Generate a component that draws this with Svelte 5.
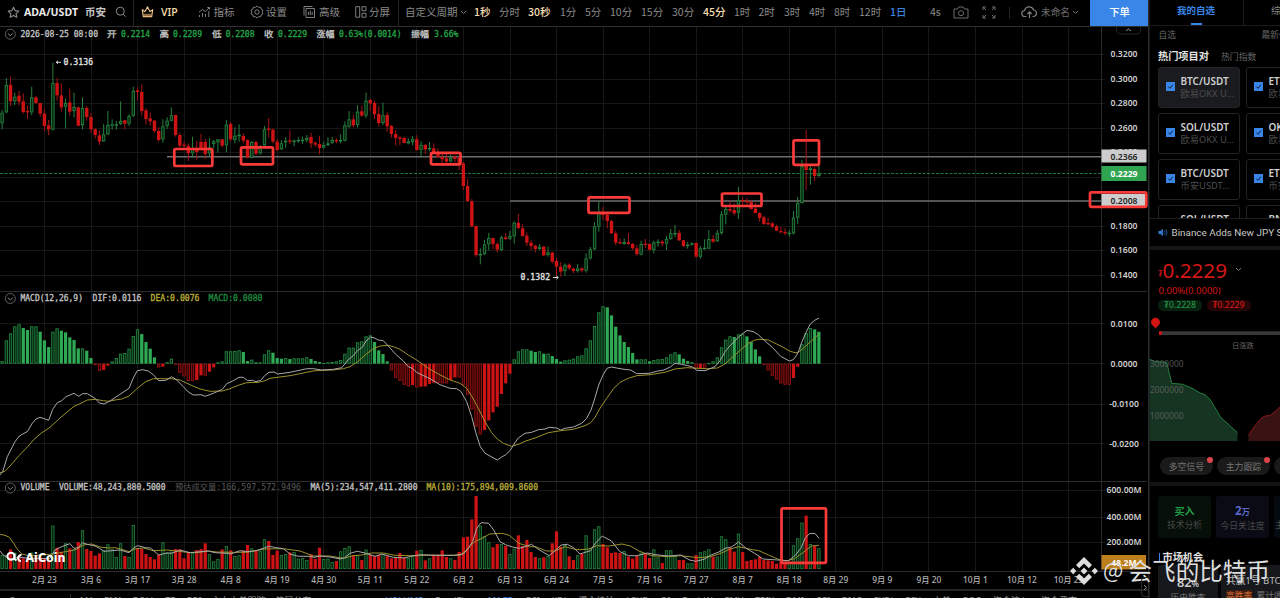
<script>
  const STEP = 4.232;
  const cx = (i) => 2.1 + STEP * i;

  // high, body top, body bottom, low in thirds of a pixel; direction u = up, d = down
  const parse = (s, off) =>
    s.trim().split(/\s+/).map((t) => {
      const up = t[0] === 'u';
      const v = t.slice(1).split(',').map((n) => off + Number(n) / 3);
      return { up, hi: v[0], top: v[1], bot: v[2], lo: v[3] };
    });

  const candles = [
    ...parse(`u150,158,190,208 u54,75,157,160 d50,75,124,138 u98,110,124,135 d93,107,125,137 d100,124,156,161 d136,153,157,177 u80,112,157,165 d108,112,129,132 d129,129,161,170
    d146,161,198,213 d180,196,208,226 u8,69,209,211 d54,69,106,122 d70,106,142,155 u115,129,140,206 d86,127,155,167 u98,141,153,172 d140,142,197,199 u112,144,195,208
    d138,144,171,182 d159,171,208,218 d205,208,225,235 d211,226,245,255 u192,223,244,246 u153,195,223,225 u178,193,197,209 u183,193,196,209 u124,183,192,195 d180,181,191,208
    u163,168,191,198 u80,93,167,171 d82,91,96,122 d73,96,153,166 d144,151,177,194 d157,175,184,197 d179,182,213,218 d202,213,240,246 u178,199,238,248 u172,182,198,207
    u142,166,182,184 d165,165,225,230 d218,225,257,262 d244,254,258,268 d250,258,280,303 u230,264,280,293 d243,264,276,299 d222,246,268,272 d236,246,282,297 u235,262,280,290
    u240,244,252,265 u237,238,247,278 d237,238,257,262 u180,194,256,276 d186,192,238,245 u202,227,240,250 u193,224,229,246 d220,228,242,250 d238,240,293,295 u243,246,293,295
    d243,246,281,285 u255,265,280,284 u198,208,256,262 d174,206,209,233 d205,209,245,250 d238,245,270,274 u240,250,268,270 u231,242,247,264 d212,241,245,252 u238,242,246,258
    u232,240,243,248 u230,239,242,252`, 60),
    ...parse(`u165,174,181,187 d158,171,190,205 d185,188,194,200 d167,192,204,223 u185,195,203,206 u172,190,195,198 u171,180,188,192 d175,180,182,190
    u163,180,183,190 u124,136,182,184 u93,118,140,143 d105,118,136,143 u75,95,135,143 d77,94,107,110 u38,62,107,114 d57,60,70,93 d62,69,103,117 d78,102,129,140
    u68,106,129,135 d97,105,139,155 d135,138,162,173 d150,162,174,197 d168,173,177,196 d170,174,189,190 u175,184,190,193 u168,178,186,196 d166,178,210,212 u184,195,209,233
    d192,195,208,222 u186,204,208,214 d190,205,217,219 d205,222,231,234 d222,230,238,259 d221,235,245,248 u223,234,244,248 d226,230,237,248 d228,234,250,270 d246,250,318,330
    d297,318,363,366 d357,364,439,441 d438,438,525,531 u505,522,526,553 u480,493,522,525 u459,474,493,511 d473,474,492,507 d486,492,509,518 u468,472,510,513 d459,472,477,481
    u453,468,476,480 u424,428,469,491 d402,428,444,448 d433,445,468,470 d457,467,488,498 d480,488,498,511 d494,497,507,517 u492,500,507,510 d498,500,526,528 u500,517,525,530
    d515,518,545,550 d534,543,560,590 d546,560,575,590 u550,555,573,588 d550,554,565,570 d563,566,573,580 u552,565,573,578 d562,565,571,577 u520,535,572,578 u501,508,535,539
    u426,439,508,511 u363,400,440,455`, 80),
    ...parse(`d290,310,315,330 d309,314,333,355 d330,333,370,372 d362,370,398,405 d385,396,400,403 u385,396,402,404 d369,397,402,405 d398,402,415,420
    d405,415,432,438 u392,402,434,436 d387,401,404,414 d400,402,419,422 u392,397,420,430 u388,395,398,410 d390,395,400,408 u378,387,401,420 u357,370,387,389 u345,369,371,382
    d360,369,391,393 d390,391,408,411 u396,404,408,416 u397,400,404,407 d397,399,440,443 u408,415,440,446 u388,413,416,419 u360,387,416,417 d375,387,395,399 u360,369,394,396
    u303,313,369,374 u290,297,314,343 d275,297,302,308 d280,300,310,316 u231,270,308,327 d261,270,273,288 d264,272,277,285 d270,276,297,299 d279,296,309,310 d306,309,324,335
    d318,322,342,345 d323,339,341,345 d336,340,350,355 d344,349,362,364 d350,363,367,370 d355,366,370,376 u360,368,371,380 u303,323,370,374 u261,279,323,342 u150,168,279,281
    d60,165,180,240 u168,175,180,224 d172,177,198,213 u168,192,198,200`, 110)
  ];

  const macd = `213 151 130 109 103 114 120 109 109 125 151 171 125 115 122 127 142 150 175 175 182 204 225 242 240 227 214 204 191 189 176 138 118 132 156 176 202 232 230 217
  206 224 248 259 273 273 270 256 257 245 232 217 214 184 184 183 181 186 213 209 217 217 193 181 188 204 206 204 207 205 205 205 202 207 213 216 219 217 216 214
  210 191 173 173 157 154 139 136 156 181 192 214 241 263 272 284 289 285 292 290 289 282 278 279 280 280 270 262 262 285 314 358 410 433 420 391 367 350 312 280
  251 208 184 178 178 182 186 184 191 191 198 207 215 211 209 206 199 196 175 151 108 67 49 52 76 110 136 156 171 189 208 208 208 214 210 208 207 202 193 187
  193 206 213 217 237 234 236 219 214 202 172 149 139 141 133 131 139 156 178 199 224 241 257 268 280 284 284 264 230 163 129 114 118 125`
    .trim().split(/\s+/).map((n) => (221 - Number(n)) / 3);

  const hist = macd.map((h, i) => {
    const p = i ? macd[i - 1] : 0;
    return { h, hollow: h > 0 ? h >= p : h <= p };
  });

  const volume = `225 225 208 218 228 235 235 218 225 230 235 240 137 203 215 190 205 207 186 151 207 213 227 220 210 193 208 231 190 228 231 135 205 207 222 231 238 223 187 218
  215 207 208 235 217 218 210 207 190 223 244 237 208 198 211 228 226 212 195 205 213 212 178 183 225 212 225 222 217 216 236 234 240 223 237 203 237 236 246 243
  214 204 199 225 225 240 209 225 229 225 222 228 235 234 219 233 234 225 212 210 241 235 224 224 211 231 235 240 216 172 170 118 48 137 168 187 202 192 192 198
  222 206 166 198 180 216 231 235 232 228 190 154 200 195 229 240 226 222 166 205 148 139 192 202 219 217 219 213 230 236 228 218 220 234 208 232 249 211 211 228
  240 240 250 250 225 217 214 208 230 230 169 178 203 215 161 216 243 240 238 230 240 241 243 251 245 250 246 196 175 128 107 192 198 205`
    .trim().split(/\s+/).map((n) => (267 - Number(n)) / 3);

  const seg = (s, ox, sx, oy) =>
    s.trim().split(/\s+/).map((p) => {
      const [x, y] = p.split(',').map(Number);
      return `${(ox + x / sx).toFixed(1)},${(oy + y / 3).toFixed(1)}`;
    }).join(' ');

  const dif = seg(`0,555 8,545 22,500 45,455 58,438 83,424 95,402 108,387 120,382 133,386 146,391 158,358 172,338 185,332 198,320 222,310 236,319 248,311 262,311 285,325 298,339 312,342 330,333 360,313 387,295 400,264 412,242 428,239 445,243 460,254 476,272 498,271 515,260 530,270 550,290 565,306 580,315 603,314 616,319 640,310 667,298 680,281 700,272 717,262 730,262 743,272 758,271 768,275 782,271 795,256 807,247 822,246 833,252 870,247 920,236 940,236 965,240 1000,238 1025,233 1047,207 1060,197 1072,182 1087,172 1098,153 1112,141 1123,144 1135,150 1150,152 1165,168 1187,193 1210,213 1225,230 1237,235 1250,247`, 0, 3, 290)
    + ' ' + seg(`0,252 30,266 60,284 90,295 110,296 122,304 140,335 155,380 168,430 181,470 195,490 219,503 232,510 244,502 257,494 270,482 285,458 295,444 315,430 335,427 355,419 375,417 388,412 410,414 422,420 435,415 460,411 485,400 500,385 513,360 523,330 536,285 549,255 561,235 574,231 590,234 612,238 632,240 650,251 688,250 710,244 732,240 752,230 765,220 785,223 803,227 818,231 830,241 855,242 885,230 900,212 915,185 930,167 943,155 955,142 968,131 981,121 1000,125 1015,134 1035,153 1057,172 1082,199 1108,213 1120,209 1130,195 1138,178 1146,155 1158,127 1171,102 1184,91 1197,84`, 420, 3, 290);
  const dea = seg(`0,548 15,544 30,528 58,496 83,470 100,450 123,430 150,412 180,384 205,363 222,349 240,341 262,330 285,328 310,332 325,334 345,330 365,327 387,318 412,295 437,275 460,266 515,266 540,270 570,284 600,297 630,304 667,303 690,296 717,285 740,278 775,277 795,272 810,265 870,257 920,247 945,242 1000,240 1030,236 1050,230 1072,216 1098,193 1120,176 1140,168 1165,166 1180,170 1200,178 1225,195 1250,210`, 0, 3, 290)
    + ' ' + seg(`0,217 25,235 55,252 90,270 120,280 140,295 155,318 175,355 195,395 215,428 232,447 250,460 275,469 300,461 315,454 345,444 385,428 422,422 460,418 495,407 512,398 525,382 540,355 560,325 580,297 600,277 625,265 650,257 690,254 735,247 765,237 800,233 860,236 892,234 915,222 940,199 965,177 985,160 1005,150 1020,148 1045,150 1070,162 1095,175 1108,183 1125,188 1133,188 1150,175 1175,152 1197,132`, 420, 3, 290);
  const ma5 = seg(`0,213 10,225 30,238 60,232 100,236 150,235 165,210 185,200 198,195 210,191 222,205 235,203 247,188 262,193 285,198 298,205 312,214 360,210 387,218 400,205 412,197 437,203 452,204 476,225 500,219 515,220 540,210 570,218 600,215 625,213 645,218 680,220 692,222 720,212 743,215 768,212 793,204 806,199 830,203 850,206 870,222 895,229 925,229 945,232 958,228 990,231 1020,237 1034,233 1050,220 1072,214 1095,219 1110,224 1125,229 1145,222 1180,232 1212,234 1237,228 1256,225`, 0, 3, 480)
    + ' ' + seg(`0,224 40,226 80,226 103,222 115,205 125,185 135,145 145,128 163,130 175,150 190,185 205,195 220,201 235,205 250,200 265,193 280,207 295,218 307,227 320,213 335,195 350,193 365,203 380,222 395,216 405,212 415,192 433,168 455,183 475,215 495,227 515,227 540,219 560,224 590,228 620,225 640,240 655,244 675,238 690,226 710,216 725,205 740,201 757,186 775,205 795,220 815,237 850,240 875,242 890,228 905,205 915,175 925,161 938,160 948,175`, 420, 2.376, 480);
  const ma10 = seg(`0,163 15,166 28,172 40,188 50,205 65,222 90,228 120,225 150,223 180,218 220,211 235,205 250,195 275,192 300,201 325,204 345,203 365,208 387,215 405,207 430,204 460,212 500,210 530,213 560,217 590,218 625,213 650,216 700,217 740,217 793,207 850,206 900,213 940,228 990,228 1030,235 1060,227 1085,225 1115,219 1150,219 1185,226 1230,227 1256,227`, 0, 3, 480)
    + ' ' + seg(`0,226 95,226 110,210 130,185 150,173 165,162 195,160 212,166 235,190 260,200 275,200 300,213 320,213 345,200 365,207 380,209 400,207 420,197 450,198 480,192 500,198 520,213 550,227 590,230 620,227 660,233 690,230 715,220 735,208 757,200 790,209 805,212 830,226 850,237 870,243 890,236 915,213 930,198 948,196`, 420, 2.376, 480);

  const depthBid = '1149.5,359.3 1155,361.5 1166.7,362.3 1171.7,383.3 1182.7,384.3 1193,388.8 1200,393 1205,394.7 1210,399.3 1220.7,417.3 1237.5,432.7';
  const depthAsk = '1248.5,435.5 1254,427 1261,418.5 1265,416 1270,415.5 1274,412.5 1281,406';

  const dates = ['2月 23', '3月 6', '3月 17', '3月 28', '4月 8', '4月 19', '4月 30', '5月 11', '5月 22', '6月 2', '6月 13', '6月 24', '7月 5', '7月 16', '7月 27', '8月 7', '8月 18', '8月 29', '9月 9', '9月 20', '10月 1', '10月 12', '10月 23'];
  const vlines = dates.map((_, i) => Math.round(44 + 46.55 * i) + 0.5);
  const levels = [
    [54, '0.3200'], [79, '0.3000'], [103, '0.2800'], [128, '0.2600'], [152, '0.2400'], [177, ''], [201, ''], [226, '0.1800'], [250, '0.1600'], [275, '0.1400'],
    [323.5, '0.0100'], [363.8, '0.0000'], [404, '-0.0100'], [443.5, '-0.0200'],
    [490, '600.00M'], [517, '400.00M'], [542, '200.00M']
  ];
  const marks = [[174.3, 149, 38, 17], [241, 147.3, 32, 17], [431, 152.8, 29.5, 11.5], [588.5, 197.3, 41, 15.5], [722, 193.5, 39.5, 12.5], [793.5, 140.3, 25.5, 24.5], [781.5, 508.3, 44.5, 54.5], [1090, 192.3, 56.3, 14.5]];

  const legends = [
    { y: 33.7, items: [['2026-08-25 08:00', 20.5, 77.5, 'w'], ['开', 107, 9.5, 'w'], ['0.2214', 121, 29, 'g'], ['高', 159.5, 9.5, 'w'], ['0.2289', 173, 29, 'g'], ['低', 212, 9.5, 'w'], ['0.2208', 225.5, 29, 'g'], ['收', 264, 9.5, 'w'], ['0.2229', 278, 29, 'g'], ['涨幅', 316.5, 18, 'w'], ['0.63%(0.0014)', 339, 62.5, 'g'], ['振幅', 411, 18, 'w'], ['3.66%', 434, 24.5, 'g']] },
    { y: 298, items: [['MACD(12,26,9)', 20.5, 62.5, 'w'], ['DIF:0.0116', 92.5, 49, 'w'], ['DEA:0.0076', 150.5, 49, 'y'], ['MACD:0.0080', 208.5, 54, 'dg']] },
    { y: 487.5, items: [['VOLUME', 20.5, 29, 'w'], ['VOLUME:48,243,880.5000', 59, 106.5, 'w'], ['预估成交量:166,597,572.9496', 175, 126, 'gr'], ['MA(5):234,547,411.2800', 310.5, 107, 'w'], ['MA(10):175,894,009.8600', 426.5, 111.5, 'y']] }
  ];

  const periods = [['自定义周期', 'caret'], ['1秒', 'hot'], ['分时'], ['30秒', 'hot'], ['1分'], ['5分'], ['10分'], ['15分'], ['30分'], ['45分', 'hot'], ['1时'], ['2时'], ['3时'], ['4时'], ['8时'], ['12时'], ['1日', 'on'], ['4s']];
  const pairs = [['BTC/USDT', '欧易OKX U...'], ['ETH/USDT', '欧易OKX U...'], ['SOL/USDT', '欧易OKX U...'], ['OKB/USDT', '欧易OKX U...'], ['BTC/USDT', '币安USDT...'], ['ETH/USDT', '币安USDT...'], ['SOL/USDT', '币安USDT...'], ['BNB/USDT', '币安USDT...']];
  const mainInd = ['MA', 'EMA', 'BOLL', 'TD', 'BBI', '主力大单跟踪', '筹码分布'];
  const subInd = [['VOLUME', 1], ['FundFlow'], ['MACD', 1], ['RSI'], ['KDJ'], ['爆仓统计'], ['LSUR'], ['OI'], ['BasisW'], ['EMV'], ['TRIX'], ['DMI'], ['CCI'], ['BIAS'], ['SKDJ'], ['PSY'], ['大单'], ['ROC'], ['资金流入'], ['资金费率']];
</script>

{#snippet caret()}
  <svg class="caret" width="7" height="5" viewBox="0 0 7 5"><path d="M1 1l2.500 2.500L6 1" fill="none" stroke="currentColor" /></svg>
{/snippet}

<div class="app">
  <main>
    <header>
      <svg width="13" height="13" viewBox="0 0 13 13"><path d="M6.500 1.200l1.600 3.400 3.700.5-2.700 2.500.7 3.700-3.300-1.800-3.300 1.800.7-3.700L1.200 5.100l3.700-.5z" fill="none" stroke="#8d8d8d" stroke-width="1.100" stroke-linejoin="round" /></svg>
      <b class="sym">ADA/USDT</b>
      <b class="ex">币安</b>
      <svg class="mag" width="12" height="12" viewBox="0 0 12 12"><circle cx="5.300" cy="5.200" r="4" fill="none" stroke="#8d8d8d" /><path d="M8.300 8.300l2.300 2.400" stroke="#8d8d8d" /></svg>
      <i class="bar"></i>
      <svg width="13" height="12" viewBox="0 0 13 12"><path d="M1.300 3.600l2.500 2L6.500 1.300l2.700 4.300 2.500-2-1 7H2.300z" fill="none" stroke="#f3c98a" stroke-width="1.100" stroke-linejoin="round" /><path d="M2.500 7.800h8v2.700h-8z" fill="#c9975a" opacity=".75" /><circle cx="6.500" cy="1.300" r=".9" fill="#f3d9ae" /></svg>
      <span class="vip">VIP</span>
      <svg width="13" height="12" viewBox="0 0 13 12"><path d="M1.500 11V9M4.500 11V7M7.500 11V8M10.800 11V5M1 6.200L4.400 3.500l3 2L11.500 1.500M9.300 1.500h2.200v2" fill="none" stroke="#7e7e7e" /></svg>
      <span>指标</span>
      <svg width="14" height="14" viewBox="0 0 14 14"><path d="M7 .9l1.500 1.500 2.100-.3.5 2 1.900 1L12.100 7l.9 1.900-1.900 1-.5 2-2.100-.3L7 13.100l-1.500-1.500-2.100.3-.5-2-1.900-1L1.900 7 1 5.100l1.900-1 .5-2 2.100.3z" fill="none" stroke="#7e7e7e" stroke-linejoin="round" /><circle cx="7" cy="7" r="2.200" fill="none" stroke="#7e7e7e" /></svg>
      <span>设置</span>
      <svg width="13" height="12" viewBox="0 0 13 12"><path d="M3 2.500h8.500v9H3zM1 9.500V.5h8.500M5.500 9V6M7.300 9V4.500M9.200 9V6" fill="none" stroke="#7e7e7e" /></svg>
      <span>高级</span>
      <svg width="12" height="12" viewBox="0 0 12 12"><path d="M.7.7h4v10.500h-4zM7 .7h4v4H7zM7 7.200h4v4H7z" fill="none" stroke="#7e7e7e" /></svg>
      <span>分屏</span>
      <i class="bar"></i>
      {#each periods as [t, k]}
        <span class={k}>{t}{#if k === 'caret'}{@render caret()}{/if}</span>
      {/each}
      <svg width="16" height="13" viewBox="0 0 16 13"><path d="M1 3h3.500l1.300-2h4.400l1.300 2H15v9H1z" fill="none" stroke="#6d6d6d" stroke-linejoin="round" /><circle cx="8" cy="7.200" r="2.500" fill="none" stroke="#6d6d6d" /></svg>
      <svg width="14" height="13" viewBox="0 0 14 13"><path d="M1 4V1h3M1 1l3 3M10 1h3v3M13 1l-3 3M1 9v3h3M1 12l3-3M10 12h3V9M13 12l-3-3" fill="none" stroke="#6d6d6d" /></svg>
      <i class="bar short"></i>
      <svg width="17" height="13" viewBox="0 0 17 13"><path d="M5.500 10.500H4a3 3 0 0 1-.4-6A4.700 4.700 0 0 1 12.600 4a3.300 3.300 0 0 1 .2 6.500h-1.300M8.500 12V6M6.300 8L8.500 5.800 10.700 8" fill="none" stroke="#7e7e7e" stroke-width="1.200" /></svg>
      <span class="dim caret">未命名{@render caret()}</span>
      <button>下单</button>
    </header>

    <svg class="chart" width="1149" height="545" viewBox="0 26 1149 545">
      <g stroke="#171717">
        {#each vlines as x}<path d="M{x} 27V571" />{/each}
        {#each levels as [y]}<path d="M0 {Math.floor(y) + 0.5}H1105" />{/each}
      </g>
      <path d="M0 26.500H1149" stroke="#2f2f2f" />
      <g stroke="#2a2b2e"><path d="M0 291.500H1147M0 481.500H1147M1101.500 27V571" /></g>

      <g stroke="#6e6e6e" stroke-width="1.500"><path d="M167 156.700H1101M510 200.900H1101" /></g>
      <path d="M0 173.500H1105" stroke="#1f7a3f" stroke-dasharray="3 1.500" />

      {#each candles as c, i}
        {@const x = cx(i)}
        {#if c.up}
          <path d="M{x} {c.hi}V{c.top}M{x} {c.bot}V{c.lo}" stroke="#26803f" />
          <rect x={x - 1.2} y={c.top + 0.4} width="2.4" height={Math.max(0.6, c.bot - c.top - 0.8)} fill="#08240f" stroke="#268541" stroke-width=".9" />
        {:else}
          <path d="M{x} {c.hi}V{c.lo}" stroke="#a81414" />
          <rect x={x - 1.7} y={c.top} width="3.4" height={Math.max(1.3, c.bot - c.top)} fill="#cd1313" />
        {/if}
      {/each}

      {#each hist as b, i}
        {@const x = cx(i)}
        {@const y = b.h > 0 ? 363.7 - b.h : 363.7}
        {@const h = Math.max(0.8, Math.abs(b.h))}
        {#if b.hollow}
          <rect x={x - 1.2} y={y + 0.4} width="2.4" height={Math.max(0.3, h - 0.8)} fill={b.h > 0 ? '#082812' : '#300404'} stroke={b.h > 0 ? '#248a43' : '#a31212'} stroke-width=".85" />
        {:else}
          <rect x={x - 1.6} {y} width="3.2" height={h} fill={b.h > 0 ? '#2faa54' : '#cd1313'} />
        {/if}
      {/each}
      <polyline points={dea} class="ln y" />
      <polyline points={dif} class="ln w" />

      {#each volume as v, i}
        {@const x = cx(i)}
        {#if candles[i].up}
          <rect x={x - 1.2} y={569 - v + 0.4} width="2.4" height={v - 0.8} fill="#06230e" stroke="#237c3d" stroke-width=".85" />
        {:else}
          <rect x={x - 1.6} y={569 - v} width="3.2" height={v} fill="#cd1313" />
        {/if}
      {/each}
      <polyline points={ma10} class="ln y" />
      <polyline points={ma5} class="ln w" />

      {#each legends as l}
        <circle cx="10.300" cy={l.y + 0.5} r="5" fill="#000" stroke="#606060" />
        <path d="M7.800 {l.y - 0.3}l2.500 2.300 2.500-2.300" fill="none" stroke="#8a8a8a" />
        {#each l.items as [t, x, w, k]}
          <text class="mono {k}" {x} y={l.y + 2.8} textLength={w} lengthAdjust="spacingAndGlyphs">{t}</text>
        {/each}
      {/each}

      <text class="mono hl" x="63.500" y="64.500" textLength="29.500">0.3136</text>
      <path d="M56 62.300h5M58 60.800l-1.800 1.500 1.800 1.500" class="arr" />
      <text class="mono hl" x="520.500" y="279.800" textLength="29.500">0.1382</text>
      <path d="M553 277.500h5M556.500 276l1.800 1.500-1.800 1.500" class="arr" />

      {#each levels as [y, t]}
        {#if t}<text class="axis" x="1124" y={y + 3.2}>{t}</text>{/if}
      {/each}
      <rect x="1101.500" y="149.500" width="45" height="13" fill="#cdcdcd" />
      <rect x="1101.500" y="166" width="45" height="15" fill="#2fa551" />
      <rect x="1101.500" y="194" width="45" height="12" fill="#cdcdcd" />
      <text class="axis blk" x="1124" y="159.600">0.2366</text>
      <text class="axis bold" x="1124" y="176.700">0.2229</text>
      <text class="axis blk" x="1124" y="203.600">0.2008</text>
      <rect x="1101.500" y="555" width="44.500" height="14.500" fill="#bd7f1c" />
      <text class="axis bold" x="1124" y="565.500">48.2M</text>

      <g fill="none" stroke="#fb3a3a" stroke-width="2.700">
        {#each marks as [x, y, w, h]}<rect {x} {y} width={w} height={h} rx="1.500" />{/each}
      </g>
      <path d="M1116.500 27v3q0 4 5 4h14q5 0 5-4v-3" fill="#000" stroke="#262626" />
      <path d="M1126 31l2.500-2 2.500 2" fill="none" stroke="#999" />

      <g fill="none" stroke="#fff" stroke-width="2"><circle cx="11" cy="556.300" r="3.500" /><path d="M14.500 553.500v5.500l2 1.500M21.500 555a3 3 0 1 0-.5 6.300" /></g>
      <text class="logo" x="25.500" y="562" textLength="40" lengthAdjust="spacingAndGlyphs">AiCoin</text>
    </svg>

    <div class="dates">
      {#each dates as d}<span>{d}</span>{/each}
    </div>
    <footer>
      <span class="q">Q</span>
      <div class="inds">{#each mainInd as t}<span>{t}</span>{/each}</div>
      <div class="inds sub">{#each subInd as [t, on]}<span class:on>{t}</span>{/each}</div>
    </footer>
  </main>

  <aside>
    <div class="tabs"><span class="active">我的自选</span><span class="more">综合</span></div>
    <div class="cols"><span>自选</span><span>最新价</span></div>
    <div class="hot2"><b>热门项目对</b><span>热门指数</span></div>
    <div class="pairs">
      {#each pairs as [a, b], i}
        <div class="pair" class:sel={i === 0}>
          <svg width="9" height="9" viewBox="0 0 9 9"><rect width="9" height="9" fill="#3a86e8" /><path d="M2.300 4.500l1.700 1.800L6.800 2.800" fill="none" stroke="#09213f" /></svg>
          <div><b>{a}</b><small>{b}</small></div>
        </div>
      {/each}
    </div>
    <div class="news">
      <svg width="10" height="9" viewBox="0 0 10 9"><path d="M.5 3h2L5 .8v7.400L2.500 6h-2z" fill="#3277cf" /><path d="M6.300 2.500q1.500 2 0 4M7.800 1.200q2.500 3.300 0 6.600" fill="none" stroke="#255796" /></svg>
      <span>Binance Adds New JPY Spot</span>
    </div>
    <div class="price">
      <div class="big"><small>₮</small><span>0.2229</span>{@render caret()}</div>
      <div class="chg">0.00%(0.0000)</div>
      <div class="ba"><span class="bid">₮0.2228</span><span class="ask">₮0.2229</span></div>
      <svg class="range" width="131" height="17" viewBox="1149 317 131 17"><path d="M1155.500 328l-3.300-3.500a4.300 4.300 0 1 1 6.600 0z" fill="#d41414" /><rect x="1159" y="330.800" width="121" height="3.700" fill="#383838" /><rect x="1159" y="330.800" width="2.800" height="3.700" fill="#d41414" /></svg>
      <div class="day">日涨跌</div>
      <svg class="depth" width="131" height="90" viewBox="1149 354 131 90">
        <polygon points="{depthBid} 1237.500,441 1149.500,441" fill="#163422" /><polyline points={depthBid} fill="none" stroke="#257c3f" />
        <polygon points="{depthAsk} 1281,441 1248.500,441" fill="#391314" /><polyline points={depthAsk} fill="none" stroke="#8b1717" />
        <g class="dl"><text x="1150" y="367.300">3000000</text><text x="1150" y="393">2000000</text><text x="1150" y="418.500">1000000</text></g>
      </svg>
      <div class="pills"><span>多空信号</span><span>主力跟踪</span><span>大单</span></div>
    </div>
    <div class="cards">
      <div class="buy"><b>买入</b><small>技术分析</small></div>
      <div class="att"><b>2<i>万</i></b><small>今日关注度</small></div>
      <div class="oth"><small>主力</small></div>
    </div>
    <div class="mk"><i></i><b>市场机会</b></div>
    <div class="ops">
      <div class="rate"><b>82<i>%</i></b><small>历史胜率</small></div>
      <div class="strat"><span>共赢1号 BTC</span><p><em>高胜率</em>累计收益</p></div>
    </div>
  </aside>

  <div class="wm">
    <svg width="28" height="28" viewBox="0 0 28 28" fill="#ddd"><path d="M14 0l8 8-3.200 3.200L14 6.400l-4.800 4.800L6 8zM14 28l-8-8 3.200-3.200 4.800 4.800 4.800-4.800L22 20zM3.200 10.800L6.400 14l-3.200 3.200L0 14zM24.800 10.800L28 14l-3.200 3.200-3.200-3.200zM14 10.600l3.400 3.400-3.400 3.400-3.400-3.400z" /></svg>
    <span class="at">@</span><span class="who">会飞的比特币</span>
  </div>
  <div class="handle"><svg width="5" height="7" viewBox="0 0 5 7"><path d="M1 1l2.500 2.500L1 6" fill="none" stroke="#999" /></svg></div>
</div>

<style>
  :global(body) { background: #000; overflow: hidden; }
  .app { position: relative; display: flex; width: 1280px; height: 598px; overflow: hidden; background: #000; color: #8b8b8b; font-family: "Noto Sans", "Noto Sans CJK SC", sans-serif; font-size: 10.2px; }
  main { width: 1149px; height: 598px; display: flex; flex-direction: column; flex: none; overflow: hidden; }
  header { height: 26px; flex: none; display: grid; align-items: center; white-space: nowrap; padding-left: 7px; font-family: "Noto Sans CJK SC", sans-serif; font-size: 10.5px; line-height: 24px;
    grid-template-columns: 17px 61px 30px 18px 8px 20px 37px 15.5px 36.5px 16px 37px 16px 35.5px 14.5px 28.5px 7.5px 69px 25px 29px 32px 25px 25px 31px 31px 31px 31px 24.5px 25.5px 25px 25px 25px 31px 40px 23px 29px 26.5px 12px 20.5px 49px 59px; grid-template-rows: 26px; }
  header > svg { position: relative; top: -1px; }
  header span, header b { height: 24px; line-height: 22px; }
  .sym { color: #e9e9e9; font-family: "Noto Sans", sans-serif; font-size: 10.6px; }
  .ex { color: #c6c6c6; }
  .vip { color: #ffe0ae; font-weight: 500; font-family: "Noto Sans", sans-serif; font-size: 10.6px; }
  .bar { width: 1px; height: 26px; background: #242424; }
  .bar.short { height: 12px; }
  .hot { color: #f5dfb2; font-weight: 500; }
  .on { color: #3c83de; font-weight: 500; }
  .dim { color: #6c6c6c; font-size: 9.7px; }
  svg.caret { margin-left: 2px; vertical-align: 1px; color: #777; }
  button { align-self: stretch; border: 0; padding: 0 0 3px; background: #3a86e8; color: #fff; font: 500 10.3px/22px "Noto Sans CJK SC", sans-serif; }
  .chart { display: block; flex: none; }
  .mono { font-family: "DejaVu Sans Mono", "Noto Sans CJK SC", monospace; font-size: 8.1px; stroke-width: .3px; }
  text.w { fill: #c4c4c4; stroke: #c4c4c4; } text.g { fill: #23a549; stroke: #23a549; } text.dg { fill: #1f8a3f; stroke: #1f8a3f; } text.y { fill: #b9ae35; stroke: #b9ae35; } text.gr { fill: #5c5c5c; } .hl { fill: #e4e4e4; stroke: #e4e4e4; }
  .arr { fill: none; stroke: #ddd; }
  .ln { fill: none; stroke-width: 1; }
  .ln.w { stroke: #a9a9a9; } .ln.y { stroke: #9c912c; }
  .axis { fill: #d0d0d0; font-size: 8.6px; text-anchor: middle; font-weight: 600; }
  .axis.blk { fill: #222; } .axis.bold { fill: #fff; font-weight: 700; }
  .logo { fill: #fff; font: 700 11.5px "DejaVu Sans", sans-serif; }
  .dates { height: 20px; box-sizing: border-box; flex: none; display: flex; padding-left: 21.2px; border-top: 1.5px solid #292b2e; border-bottom: 2px solid #232527; overflow: hidden; }
  .dates span { width: 46.55px; flex: none; text-align: center; font-size: 8.4px; font-weight: 500; line-height: 15px; color: #b5b5b5; white-space: nowrap; }
  footer { height: 7px; box-sizing: border-box; display: flex; overflow: hidden; font-size: 9px; line-height: 13px; padding-top: 2.5px; white-space: nowrap; color: #999; }
  .q { width: 71px; padding-left: 9px; box-sizing: border-box; border-right: 1px solid #292b2e; }
  .inds { display: flex; gap: 10px; padding-left: 9px; width: 306px; box-sizing: border-box; }
  .inds.sub { width: auto; gap: 12px; }

  aside { width: 131px; flex: none; height: 598px; overflow: hidden; box-sizing: border-box; white-space: nowrap; box-shadow: -1px 0 #292b2e, inset 1px 0 #151618; font-family: "Noto Sans", "Noto Sans CJK SC", sans-serif; }
  .tabs { display: flex; height: 26px; box-sizing: border-box; border-bottom: 1px solid #1b1b1b; line-height: 21px; }
  .tabs span { flex: none; }
  .active { width: 95px; box-sizing: border-box; text-align: center; color: #3a86e8; font-weight: 700; font-size: 9.5px; border-right: 1px solid #1c1c1c; background: linear-gradient(#3a86e8, #3a86e8) 50% 100% / 11px 2px no-repeat; }
  .more { padding-left: 27px; font-size: 9.5px; }
  .cols { display: flex; gap: 85.5px; padding-left: 9.5px; height: 19px; line-height: 19px; font-size: 8.7px; color: #666; }
  .hot2 { display: flex; gap: 12px; padding-left: 9px; height: 22px; line-height: 22px; align-items: baseline; font-size: 8.9px; color: #666; }
  .hot2 b { color: #e3e3e3; font-size: 10.2px; }
  .pairs { display: grid; grid-template-columns: 82px 82px; gap: 5.5px 6px; grid-auto-rows: 40.5px; padding-left: 9px; height: 151px; overflow: hidden; box-sizing: border-box; }
  .pair { border: 1px solid #232323; border-radius: 3px; display: flex; align-items: flex-start; gap: 5.5px; padding: 6.5px 0 0 7px; overflow: hidden; }
  .pair.sel { background: #1a1b1e; }
  .pair svg { margin-top: 7.5px; flex: none; }
  .pair b { display: block; font-size: 10px; line-height: 13px; color: #cfcfcf; font-weight: 600; font-family: "Noto Sans", sans-serif; }
  .pair small { display: block; font-size: 9.3px; line-height: 12px; color: #4c4c4c; }
  .news { display: flex; align-items: center; gap: 4px; height: 32px; padding-left: 8.5px; border-top: 1px solid #1e1e1e; border-bottom: 4px solid #141619; box-sizing: border-box; color: #c8c8c8; font: 9.9px Roboto, sans-serif; }
  .news svg { flex: none; }
  .price { height: 232px; box-sizing: border-box; color: #d41717; display: flex; flex-direction: column; }
  .big { display: flex; align-items: center; height: 34px; padding: 5px 0 0 9px; box-sizing: border-box; line-height: 30px; }
  .big small { font-size: 8px; padding-top: 8px; width: 4.5px; }
  .big span { font-size: 20.6px; width: 65.5px; }
  .big svg { margin-left: 7px; }
  .chg { padding-left: 9.5px; font: 9.5px/13px "Noto Sans", sans-serif; height: 16px; }
  .ba { display: flex; gap: 4.5px; padding-left: 9px; font-size: 8.6px; font-weight: 500; line-height: 10.5px; height: 17px; }
  .ba span { width: 44px; height: 10.5px; border-radius: 5px; text-align: center; }
  .bid { background: #08210f; color: #249447; } .ask { background: #260506; }
  .range { display: block; flex: none; height: 18px; }
  .day { padding-left: 83px; font-size: 7.3px; line-height: 20px; height: 19px; color: #666; }
  .depth { display: block; flex: none; }
  .dl { fill: #6b6b6b; opacity: .75; font-size: 8.4px; }
  .pills { display: flex; gap: 4px; padding: 13px 0 0 11px; color: #767676; font-size: 8.9px; }
  .pills span { position: relative; width: 53px; height: 18px; flex: none; border-radius: 9px; background: #1a1a1a; text-align: center; line-height: 19px; }
  .pills span::after { content: ""; position: absolute; right: 0; top: 0; width: 6px; height: 6px; border-radius: 3px; background: #dc4449; }
  .cards { display: flex; gap: 5px; padding: 10px 0 0 9px; border-top: 4px solid #131313; height: 60px; box-sizing: border-box; }
  .cards div { width: 53px; height: 42px; flex: none; border-radius: 3px; text-align: center; }
  .cards b { display: block; font-size: 10px; line-height: 14px; padding-top: 7.5px; }
  .cards i, .rate i { font-style: normal; font-size: 8.5px; }
  .cards small { display: block; color: #484848; font-size: 8.8px; line-height: 14px; }
  .buy { background: #060f08; color: #23a04a; } .att { background: #0a0b14; color: #5b68c9; } .att b { font-size: 11.5px; }
  .cards .oth { background: #050b11; padding-top: 22px; box-sizing: border-box; text-align: left; padding-left: 1px; }
  .mk { height: 23px; padding: 6px 0 0 9.5px; box-sizing: border-box; font-size: 10.2px; line-height: 12px; color: #e0e0e0; display: flex; align-items: center; gap: 3px; }
  .mk i { width: 1px; height: 8px; background: #3a86e8; }
  .ops { display: flex; gap: 3px; padding-left: 9px; height: 33px; overflow: hidden; }
  .ops > div { height: 50px; flex: none; background: #17181b; border-radius: 3px; }
  .rate { width: 60px; text-align: center; color: #c9c9c9; }
  .rate b { display: block; font-size: 12.8px; line-height: 17px; padding-top: 8.5px; font-weight: 600; }
  .rate small, .strat p { display: block; font-size: 8.8px; line-height: 13px; color: #777; margin: 0; }
  .strat { width: 80px; padding-left: 5px; color: #bbb; font-size: 9.7px; }
  .strat span { display: block; line-height: 14px; padding-top: 8.5px; }
  .strat em { font-style: normal; color: #e0703a; background: #3a1d10; margin-right: 4px; }
  .strat p { padding-top: 2px; }

  .wm { position: absolute; left: 1070px; top: 556px; display: flex; align-items: center; height: 30px; color: #dedede; font: 23.6px/28px "Noto Sans CJK SC", sans-serif; white-space: nowrap; }
  .at { width: 25.5px; margin-left: 5px; font-size: 21.5px; height: 32px; }
  .who { height: 30px; }
  .handle { position: absolute; left: 1141px; top: 577px; width: 8px; height: 20px; box-sizing: border-box; border: 1px solid #2a2a2a; border-right: 0; border-radius: 4px 0 0 4px; display: grid; place-items: center; }
</style>
